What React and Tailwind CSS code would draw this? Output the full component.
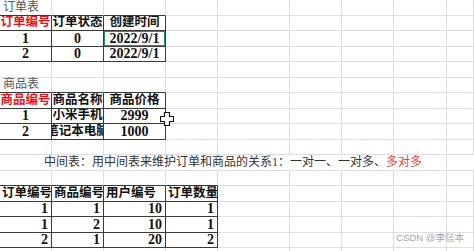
import React from "react";

// column widths of the sheet (A..I)
const COLS = [
  "w-[52px]",
  "w-[52px]",
  "w-[62px]",
  "w-[52px]",
  "w-[72px]",
  "w-[52px]",
  "w-[52px]",
  "w-[53px]",
  "flex-1",
];

// bordered tables: [rowStart, rowEnd, colStart, colEnd]
const TABLES = [
  [1, 3, 0, 2],
  [6, 8, 0, 2],
  [12, 15, 0, 3],
];

const KIND = {
  title: "justify-start pl-[3px] text-[12px] text-[#555] overflow-visible",
  hr: "justify-center text-[12.5px] font-bold text-[#e8141b] overflow-hidden",
  h: "justify-center text-[12.5px] font-bold text-[#111] overflow-hidden",
  hl: "justify-start pl-[2px] text-[12.5px] font-bold text-[#111] overflow-hidden",
  n: "justify-center text-[14px] font-bold text-[#111] overflow-hidden",
  nr: "justify-end pr-[3px] text-[14px] font-bold text-[#111] overflow-hidden",
};

const rows = [
  [{ t: "订单表", k: "title" }],
  [
    { t: "订单编号", k: "hr" },
    { t: "订单状态", k: "h" },
    { t: "创建时间", k: "h" },
  ],
  [
    { t: "1", k: "n" },
    { t: "0", k: "n" },
    { t: "2022/9/1", k: "n", sel: true },
  ],
  [
    { t: "2", k: "n" },
    { t: "0", k: "n" },
    { t: "2022/9/1", k: "n" },
  ],
  [],
  [{ t: "商品表", k: "title" }],
  [
    { t: "商品编号", k: "hr" },
    { t: "商品名称", k: "h" },
    { t: "商品价格", k: "h" },
  ],
  [
    { t: "1", k: "n" },
    { t: "小米手机", k: "h" },
    { t: "2999", k: "n" },
  ],
  [
    { t: "2", k: "n" },
    { t: "笔记本电脑", k: "h" },
    { t: "1000", k: "n" },
  ],
  [],
  "note",
  [],
  [
    { t: "订单编号", k: "hl" },
    { t: "商品编号", k: "hl" },
    { t: "用户编号", k: "hl" },
    { t: "订单数量", k: "hl" },
  ],
  [
    { t: "1", k: "nr" },
    { t: "1", k: "nr" },
    { t: "10", k: "nr" },
    { t: "1", k: "nr" },
  ],
  [
    { t: "1", k: "nr" },
    { t: "2", k: "nr" },
    { t: "10", k: "nr" },
    { t: "1", k: "nr" },
  ],
  [
    { t: "2", k: "nr" },
    { t: "1", k: "nr" },
    { t: "20", k: "nr" },
    { t: "2", k: "nr" },
  ],
  [],
];

const inTable = (r, c) =>
  TABLES.some(([r0, r1, c0, c1]) => r >= r0 && r <= r1 && c >= c0 && c <= c1);

const darkRight = (r, c) => inTable(r, c) || inTable(r, c + 1);
const darkBottom = (r, c) => inTable(r, c) || inTable(r + 1, c);

const Cell = ({ r, c, cell }) => {
  const right = darkRight(r, c) ? "border-r-[#3a3a3a]" : "border-r-[#dcdde6]";
  const bottom = darkBottom(r, c) ? "border-b-[#3a3a3a]" : "border-b-[#dcdde6]";
  return (
    <div
      className={`relative flex shrink-0 items-center whitespace-nowrap border-r border-b ${right} ${bottom} ${
        COLS[c]
      } ${cell ? KIND[cell.k] : ""}`}
    >
      {cell && <span className="leading-[15px]">{cell.t}</span>}
      {cell && cell.sel && (
        <div className="absolute -left-px -top-px right-[-1px] bottom-[-1px] border-2 border-[#1f9a5a]" />
      )}
    </div>
  );
};

const NoteRow = () => (
  <div className="flex h-[15.5px]">
    <div className="flex w-[447px] shrink-0 items-center whitespace-nowrap border-r border-b border-[#dcdde6] pl-[44px] text-[12px] text-[#333]">
      <span className="leading-[15px]">
        中间表：用中间表来维护订单和商品的关系1：一对一、一对多、
        <span className="text-[#e8413e]">多对多</span>
      </span>
    </div>
    <div className="flex-1 border-b border-[#dcdde6]" />
  </div>
);

export default function App() {
  return (
    <div className='relative h-[251px] w-[474px] overflow-hidden bg-white font-["Liberation_Serif","Noto_Sans_CJK_SC",serif]'>
      {rows.map((row, r) =>
        row === "note" ? (
          <NoteRow key={r} />
        ) : (
          <div key={r} className="flex h-[15.5px]">
            {COLS.map((_, c) => (
              <Cell key={c} r={r} c={c} cell={row[c]} />
            ))}
          </div>
        )
      )}

      {/* excel cross cursor */}
      <svg
        className="absolute left-[160px] top-[112px]"
        width="14"
        height="14"
        viewBox="0 0 14 14"
      >
        <polygon
          points="4.5,0.5 9.5,0.5 9.5,4.5 13.5,4.5 13.5,9.5 9.5,9.5 9.5,13.5 4.5,13.5 4.5,9.5 0.5,9.5 0.5,4.5 4.5,4.5"
          fill="#fff"
          stroke="#111"
          strokeWidth="1.2"
          strokeLinejoin="round"
        />
      </svg>

      {/* watermark */}
      <div className='absolute bottom-[6px] right-[10px] font-["Liberation_Sans","Noto_Sans_CJK_SC",sans-serif] text-[9.5px] text-[#a5a5a5]'>
        CSDN @李信本
      </div>
    </div>
  );
}
